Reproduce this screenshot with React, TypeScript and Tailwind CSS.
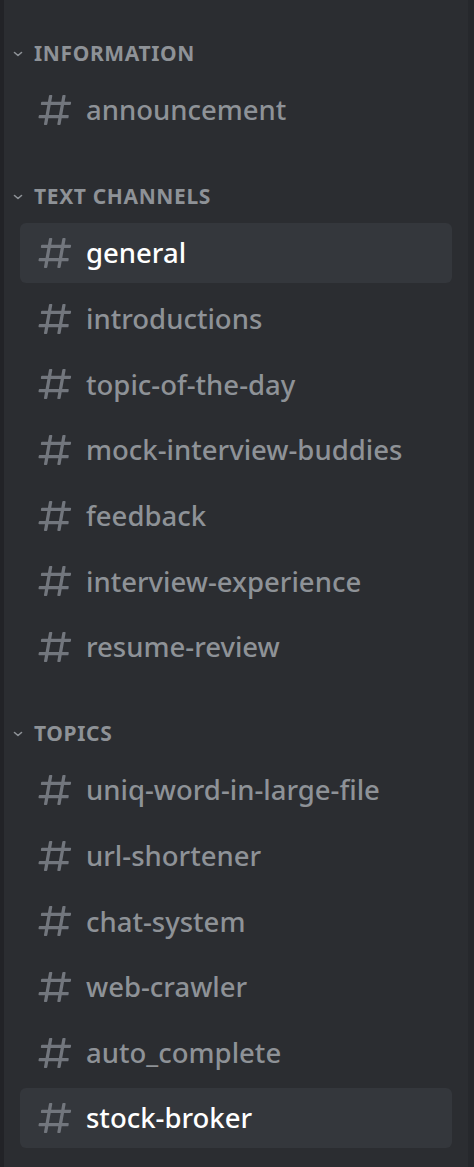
import React from "react";

type Section = {
  title: string;
  channels: string[];
};

const sections: Section[] = [
  { title: "INFORMATION", channels: ["announcement"] },
  {
    title: "TEXT CHANNELS",
    channels: [
      "general",
      "introductions",
      "topic-of-the-day",
      "mock-interview-buddies",
      "feedback",
      "interview-experience",
      "resume-review",
    ],
  },
  {
    title: "TOPICS",
    channels: [
      "uniq-word-in-large-file",
      "url-shortener",
      "chat-system",
      "web-crawler",
      "auto_complete",
      "stock-broker",
    ],
  },
];

const selected = ["general", "stock-broker"];

const HashIcon = () => (
  <svg width="40" height="40" viewBox="0 0 24 24" className="shrink-0">
    <path
      fill="#72767d"
      fillRule="evenodd"
      d="M5.88657 21C5.57547 21 5.3399 20.7189 5.39427 20.4126L6.00001 17H2.59511C2.28449 17 2.04905 16.7198 2.10259 16.4138L2.27759 15.4138C2.31946 15.1746 2.52722 15 2.77011 15H6.35001L7.41001 9H4.00511C3.69449 9 3.45905 8.71977 3.51259 8.41381L3.68759 7.41381C3.72946 7.17456 3.93722 7 4.18011 7H7.76001L8.39677 3.41262C8.43914 3.17391 8.64664 3 8.88907 3H9.87344C10.1845 3 10.4201 3.28107 10.3657 3.58738L9.76001 7H15.76L16.3968 3.41262C16.4391 3.17391 16.6466 3 16.8891 3H17.8734C18.1845 3 18.4201 3.28107 18.3657 3.58738L17.76 7H21.1649C21.4755 7 21.711 7.28023 21.6574 7.58619L21.4824 8.58619C21.4406 8.82544 21.2328 9 20.9899 9H17.41L16.35 15H19.7549C20.0655 15 20.301 15.2802 20.2474 15.5862L20.0724 16.5862C20.0306 16.8254 19.8228 17 19.5799 17H16L15.3632 20.5874C15.3209 20.8261 15.1134 21 14.8709 21H13.8866C13.5755 21 13.3399 20.7189 13.3943 20.4126L14 17H8.00001L7.36325 20.5874C7.32088 20.8261 7.11337 21 6.87094 21H5.88657ZM9.41045 9L8.35045 15H14.3504L15.4104 9H9.41045Z"
    />
  </svg>
);

const Chevron = () => (
  <svg width="10" height="10" viewBox="0 0 10 10" className="shrink-0">
    <path d="M1.5 3.5 L5 6.5 L8.5 3.5" fill="none" stroke="#8e9297" strokeWidth="1.6" strokeLinecap="round" strokeLinejoin="round" />
  </svg>
);

const App = () => {
  return (
    <div className="flex min-h-[1167px] w-[474px] bg-[#2b2d31] font-['Noto_Sans',sans-serif]">
      <div className="w-[4px] shrink-0 bg-[#222327]" />
      <div className="flex flex-1 flex-col gap-[37px] pt-[34px] pr-[16px]">
        {sections.map((section) => (
          <div key={section.title} className="flex flex-col">
            {/* category header */}
            <div className="mb-[6px] flex h-[40px] items-center gap-[11px] pl-[9px]">
              <Chevron />
              <span className="text-[21px] font-bold tracking-[0.03em] text-[#8e9297]">
                {section.title}
              </span>
            </div>
            <div className="flex flex-col gap-[5.67px] pl-[16px]">
              {section.channels.map((name) => {
                const active = selected.includes(name);
                return (
                  <div
                    key={name}
                    className={`flex h-[60px] items-center gap-[11px] rounded-[6px] pl-[15px] ${
                      active ? "bg-[#34373c]" : ""
                    }`}
                  >
                    <HashIcon />
                    <span
                      className={`text-[27.5px] leading-none font-medium ${
                        active ? "text-white" : "text-[#8e9297]"
                      }`}
                    >
                      {name}
                    </span>
                  </div>
                );
              })}
            </div>
          </div>
        ))}
      </div>
      <div className="w-[6px] shrink-0 bg-[#26282c]" />
    </div>
  );
};

export default App;
